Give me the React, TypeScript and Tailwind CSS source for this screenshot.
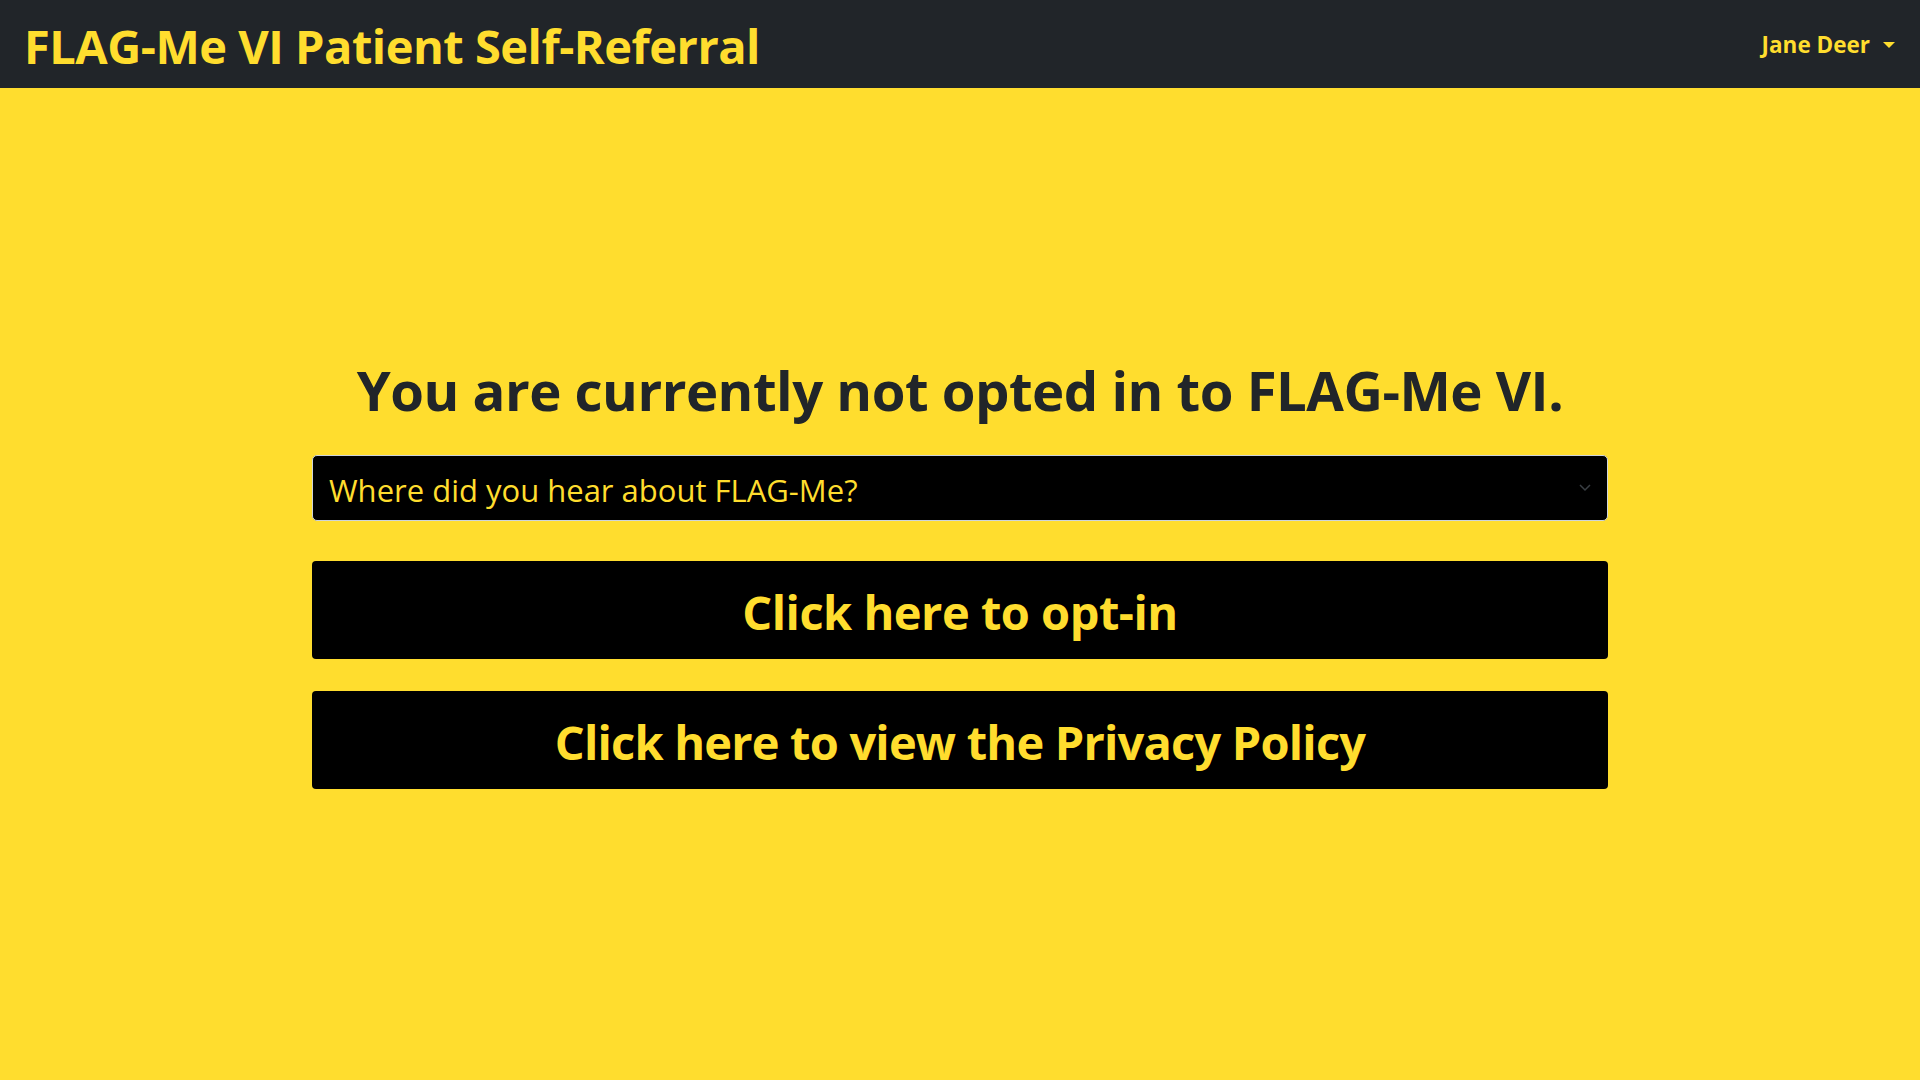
import { useState } from "react";

const SOURCES = ["Where did you hear about FLAG-Me?", "My doctor", "A friend or family member", "Online", "Other"];

export default function App() {
  const [source, setSource] = useState(SOURCES[0]);

  return (
    <div className="min-h-screen flex flex-col bg-[#ffdd2e] font-['Open_Sans',sans-serif]">
      {/* Top navbar */}
      <nav className="h-[88px] bg-[#212529] flex items-center justify-between pl-[24px] pr-[25px]">
        <h1 className="pt-[5px] text-[47px] font-bold text-[#ffdd2e] tracking-[-0.5px]">FLAG-Me VI Patient Self-Referral</h1>
        <button className="flex items-center gap-[13px] text-[22.5px] font-bold text-[#ffdd2e] pt-[2px]">
          Jane Deer
          <svg width="12" height="6" viewBox="0 0 12 6">
            <path d="M0 0h12L6 6z" fill="#ffdd2e" />
          </svg>
        </button>
      </nav>

      {/* Main content */}
      <main className="flex-1 flex flex-col items-center pt-[270px]">
        <div className="w-[1296px] flex flex-col">
          <h2 className="text-[54.5px] leading-[1.2] font-bold text-[#212529] text-center tracking-[-0.5px]">
            You are currently not opted in to FLAG-Me VI.
          </h2>

          <div className="relative mt-[32px]">
            <select
              value={source}
              onChange={(e) => setSource(e.target.value)}
              className="appearance-none w-full h-[66px] bg-black text-[#ffdd2e] text-[31px] pl-[16px] pt-[3px] border border-[#ced4da] rounded-[5px] outline-none"
            >
              {SOURCES.map((s) => (
                <option key={s} value={s}>
                  {s}
                </option>
              ))}
            </select>
            <svg className="absolute right-[17px] top-[29px] pointer-events-none" width="12" height="8" viewBox="0 0 12 8">
              <path d="M1 1l5 5 5-5" fill="none" stroke="#3a3f44" strokeWidth="1.5" />
            </svg>
          </div>

          <button className="mt-[40px] h-[98px] w-full bg-black rounded-[4px] pt-[4px] text-[#ffdd2e] text-[47px] font-bold tracking-[-0.5px]">
            Click here to opt-in
          </button>
          <button className="mt-[32px] h-[98px] w-full bg-black rounded-[4px] pt-[4px] text-[#ffdd2e] text-[47px] font-bold tracking-[-0.8px]">
            Click here to view the Privacy Policy
          </button>
        </div>
      </main>
    </div>
  );
}
